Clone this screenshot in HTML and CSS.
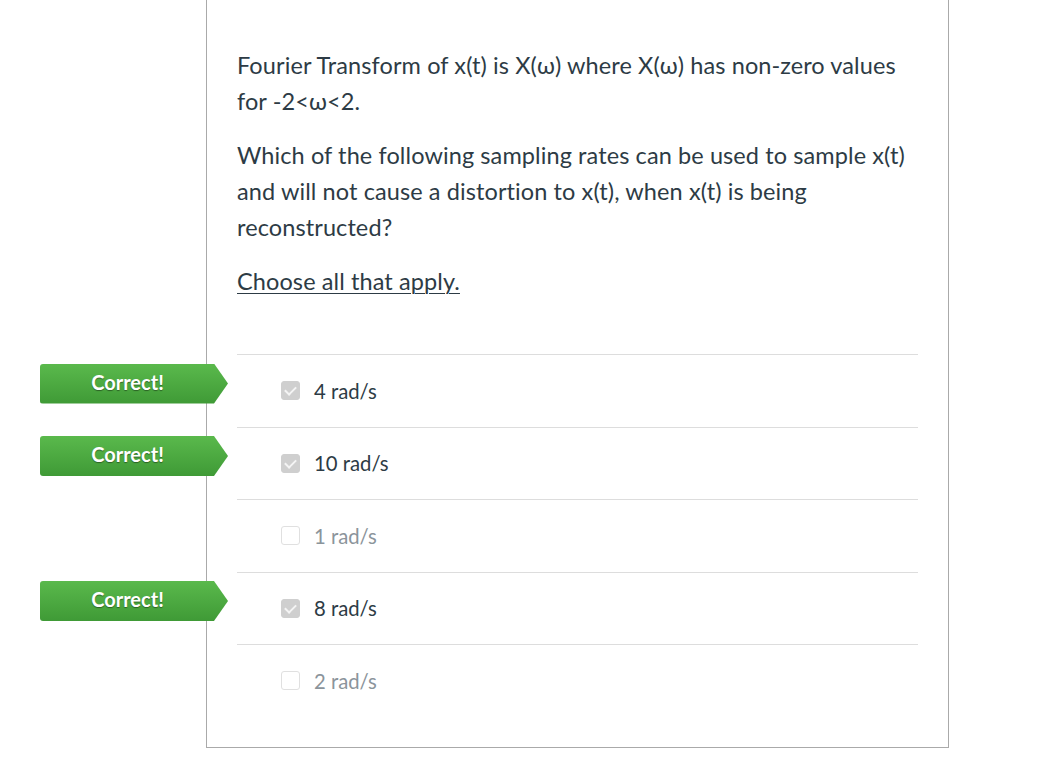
FILE: index.html
```html
<!DOCTYPE html>
<html>
<head>
<title>Quiz Question</title>
<link rel="stylesheet" href="styles.css">
</head>
<body>

<div class="page">
  <div class="question">
    <div class="question-text">
      <p>Fourier Transform of x(t) is X(ω) where X(ω) has non-zero values for -2&lt;ω&lt;2.</p>
      <p>Which of the following sampling rates can be used to sample x(t) and will not cause a distortion to x(t), when x(t) is being reconstructed?</p>
      <p><u>Choose all that apply.</u></p>
    </div>

    <div class="answers">
      <div class="answer selected">
        <span class="badge">Correct!</span>
        <span class="box checked"></span>
        <span class="label">4 rad/s</span>
      </div>
      <div class="answer selected">
        <span class="badge">Correct!</span>
        <span class="box checked"></span>
        <span class="label">10 rad/s</span>
      </div>
      <div class="answer">
        <span class="box"></span>
        <span class="label">1 rad/s</span>
      </div>
      <div class="answer selected">
        <span class="badge">Correct!</span>
        <span class="box checked"></span>
        <span class="label">8 rad/s</span>
      </div>
      <div class="answer">
        <span class="box"></span>
        <span class="label">2 rad/s</span>
      </div>
    </div>
  </div>
</div>

</body>
</html>
```

FILE: styles.css
```css
body {
  margin: 0;
  padding: 0;
  background-color: #fff;
  font-family: Lato, "Open Sans", sans-serif;
  color: #2d3b45;
}

.page {
  padding-left: 206px;
}

.question {
  width: 681px;
  padding: 29px 30px 30px 30px;
  border: 1px solid #aaaaaa;
  border-top: none;
}

.question-text p {
  margin: 18px 0;
  font-size: 23.5px;
  letter-spacing: 0.1px;
  line-height: 36px;
}

.question-text u {
  text-decoration-thickness: 1px;
  text-underline-offset: 3px;
}

.answers {
  margin-top: 55px;
}

.answer {
  position: relative;
  display: flex;
  align-items: center;
  height: 71.5px;
  border-top: 1px solid #dddddd;
  padding-left: 44px;
  font-size: 20.3px;
}

.label {
  margin-left: 14px;
  color: #8b949b;
}

.selected .label {
  color: #2d3b45;
}

.box {
  position: relative;
  width: 17px;
  height: 17px;
  border: 1px solid #e0e0e0;
  border-radius: 3px;
  background-color: #fff;
}

.box.checked {
  background-color: #cfcfcf;
  border-color: #cfcfcf;
}

.box.checked::after {
  content: "";
  position: absolute;
  left: 5px;
  top: 2px;
  width: 5px;
  height: 9px;
  border: solid #f4f4f4;
  border-width: 0 2px 2px 0;
  transform: rotate(45deg);
}

.badge {
  position: absolute;
  left: -197px;
  top: 8.5px;
  width: 188px;
  height: 40px;
  padding-right: 13px;
  box-sizing: border-box;
  border-radius: 3px;
  background: linear-gradient(#5ab94c, #3f9a36);
  clip-path: polygon(0 0, calc(100% - 14px) 0, 100% 50%, calc(100% - 14px) 100%, 0 100%);
  color: #fff;
  font-size: 20px;
  font-weight: bold;
  line-height: 37px;
  text-align: center;
  text-shadow: 0 1px 1px rgba(0, 0, 0, 0.4);
}
```
